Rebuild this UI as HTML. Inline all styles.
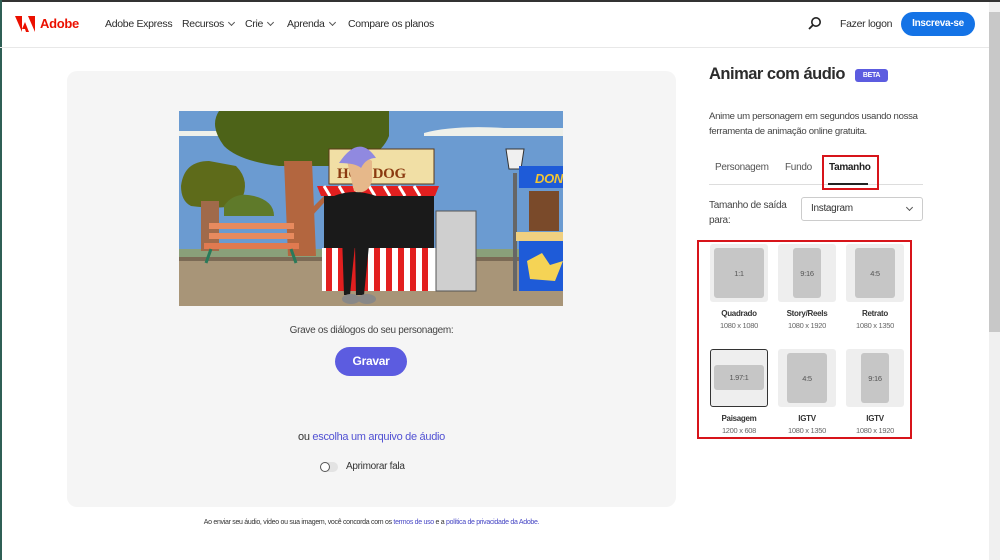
<!DOCTYPE html>
<html><head><meta charset="utf-8"><style>
*{box-sizing:border-box;margin:0;padding:0}
body{width:1000px;height:560px;overflow:hidden;background:#fff;font-family:"Liberation Sans",Arial,sans-serif;color:#2c2c2c;position:relative;letter-spacing:-0.3px}
.a{position:absolute}
.nav{font-size:10.5px;color:#2c2c2c;top:18px;white-space:nowrap}
.chev{display:inline-block;width:5px;height:5px;border-right:1px solid #555;border-bottom:1px solid #555;transform:rotate(45deg);margin-left:5px;position:relative;top:-2px}
.card{position:absolute;width:58px;height:58px;background:#eee;border-radius:3px}
.card div{position:absolute;background:#c6c6c6;border-radius:3px;font-size:7.5px;color:#555;display:flex;align-items:center;justify-content:center}
.lbl{position:absolute;width:90px;text-align:center;font-size:8px;font-weight:bold;color:#333}
.sub{position:absolute;width:90px;text-align:center;font-size:7.5px;color:#666}
</style></head><body>
<div class="a" style="left:0;top:0;width:1000px;height:2px;background:#333"></div>
<div class="a" style="left:0;top:0;width:2px;height:560px;background:#2f5f55"></div>
<svg class="a" style="left:15px;top:16px" width="20" height="16" viewBox="0 0 20 16"><path d="M0 0h7v16zM13 0h7v16zM10 6l4 10h-3l-1-3h-3z" fill="#eb1000"/></svg>
<div class="a" style="left:40px;top:16px;font-size:13px;color:#eb1000;font-weight:bold">Adobe</div>
<div class="a nav" style="left:105px">Adobe Express</div>
<div class="a nav" style="left:182px">Recursos<span class="chev"></span></div>
<div class="a nav" style="left:245px">Crie<span class="chev"></span></div>
<div class="a nav" style="left:287px">Aprenda<span class="chev"></span></div>
<div class="a nav" style="left:348px">Compare os planos</div>
<svg class="a" style="left:808px;top:16px" width="14" height="14" viewBox="0 0 14 14"><circle cx="8" cy="6" r="4.2" fill="none" stroke="#222" stroke-width="1.6"/><path d="M5 9l-4 4" stroke="#222" stroke-width="1.8"/></svg>
<div class="a nav" style="left:840px">Fazer logon</div>
<div class="a" style="left:901px;top:12px;width:74px;height:24px;border-radius:12px;background:#1473e6;color:#fff;font-size:10px;font-weight:bold;text-align:center;line-height:24px">Inscreva-se</div>
<div class="a" style="left:0;top:47px;width:989px;height:1px;background:#e8e8e8"></div>
<div class="a" style="left:989px;top:2px;width:11px;height:558px;background:#f0f0f0"></div>
<div class="a" style="left:989px;top:12px;width:11px;height:320px;background:#c8c8c8"></div>
<div class="a" style="left:67px;top:71px;width:609px;height:436px;background:#f5f5f5;border-radius:10px"></div>
<svg class="a" style="left:179px;top:111px" width="384" height="195" viewBox="0 0 384 195">
<rect width="384" height="195" fill="#6b9bd1"/>
<path d="M0 20h40v-10h10v15h-50zM245 22q30-8 80-5 40 0 59 0v8h-139zM150 48q30-5 80 4h-80zM50 95q20-3 40 0z" fill="#eef0ea"/>
<rect x="0" y="138" width="384" height="12" fill="#8aa07a"/>
<rect x="0" y="150" width="384" height="45" fill="#a89578"/>
<rect x="0" y="146" width="384" height="4" fill="#7b6a55"/>
<path d="M30 50q-25 0-28 25 0 15 10 20 40 5 50-5 10-20-5-35z" fill="#5e6b1a"/>
<rect x="22" y="90" width="18" height="50" fill="#a06a4a"/>
<path d="M40 0h170v25q-10 25-50 30h-60q-40-5-55-20-15-20-5-35z" fill="#4d6318"/>
<path d="M105 50h28l4 95h-28z" fill="#b3663f"/>
<path d="M130 100l20-20 3 3-20 22z" fill="#b3663f"/>
<path d="M45 95q10-15 30-10 20 5 20 20h-50z" fill="#5f7a2a"/>
<rect x="30" y="112" width="85" height="6" fill="#e88a5e"/><rect x="30" y="122" width="85" height="6" fill="#e88a5e"/><rect x="25" y="132" width="95" height="6" fill="#e07a50"/>
<path d="M32 138l-5 14M112 138l5 14" stroke="#2a7a5a" stroke-width="3"/>
<rect x="150" y="38" width="105" height="35" fill="#f1dfa5" stroke="#5a3a1a"/>
<text x="158" y="67" font-size="15" font-weight="bold" fill="#8a3a10" font-family="Liberation Serif">HOT DOG</text>
<path d="M138 75h122l-4 10h-114z" fill="#e21f1f"/>
<path d="M145 75l6 10M160 75l6 10M175 75l6 10M190 75l6 10M205 75l6 10M220 75l6 10M235 75l6 10" stroke="#fff" stroke-width="3"/>
<rect x="145" y="85" width="110" height="52" fill="#1a1a1a"/>
<rect x="143" y="137" width="115" height="43" fill="#fff"/>
<path d="M150 137v43M162 137v43M174 137v43M186 137v43M198 137v43M210 137v43M222 137v43M234 137v43M246 137v43" stroke="#e21f1f" stroke-width="6"/>
<rect x="257" y="100" width="40" height="80" fill="#cfcfcf" stroke="#555"/>
<rect x="828" y="0" width="0" height="0"/>
<rect x="828" y="0" width="0" height="0"/>
<rect x="827" y="0" width="0" height="0"/>
<rect x="828" y="0" width="0" height="0"/>
<rect x="826" y="0" width="0" height="0"/>
<rect x="827" y="0" width="0" height="0"/>
<rect x="826" y="0" width="0" height="0"/>
<rect x="827" y="0" width="0" height="0"/>
<rect x="827" y="0" width="0" height="0"/>
<rect x="826" y="0" width="0" height="0"/>
<rect x="827" y="0" width="0" height="0"/>
<rect x="826" y="0" width="0" height="0"/>
<rect x="827" y="0" width="0" height="0"/>
<rect x="828" y="0" width="0" height="0"/>
<rect x="333" y="55" width="0" height="0"/>
<rect x="334" y="62" width="4" height="118" fill="#666"/><path d="M327 38h18l-3 20h-12z" fill="#f0f0f0" stroke="#333"/>
<rect x="340" y="55" width="44" height="22" fill="#1e5bd8"/>
<text x="356" y="72" font-size="13" font-weight="bold" fill="#f3c634" font-family="Liberation Sans" font-style="italic">DON</text>
<path d="M350 80h30v40h-30z" fill="#7a4a2a"/>
<rect x="340" y="130" width="44" height="50" fill="#1e5bd8"/><path d="M348 150l15-8 8 12 13-4-8 20-25-2z" fill="#f5d355"/>
<rect x="337" y="121" width="47" height="9" fill="#f0d080"/>
<path d="M168 50q12-10 25 0v20q-5 15-18 10z" fill="#e6b88a"/>
<path d="M160 52q20-30 37-5-10 0-15 10-5-5-22-5z" fill="#9089e0"/>
<path d="M155 85q20-8 42 0l-6 40h-30z" fill="#1a1a1a"/>
<path d="M163 124h28l-6 60h-8l-1-50-5 50h-6z" fill="#1a1a1a"/>
<ellipse cx="172" cy="188" rx="9" ry="5" fill="#888"/><ellipse cx="188" cy="188" rx="9" ry="5" fill="#888"/>
</svg>
<div class="a" style="left:0;width:743px;top:325px;text-align:center;font-size:10px;color:#444">Grave os diálogos do seu personagem:</div>
<div class="a" style="left:335px;top:347px;width:72px;height:29px;border-radius:15px;background:#5c5ce0;color:#fff;font-weight:bold;font-size:12px;text-align:center;line-height:29px">Gravar</div>
<div class="a" style="left:0;width:743px;top:431px;text-align:center;font-size:11px;color:#333">ou <span style="color:#5151d3">escolha um arquivo de áudio</span></div>
<div class="a" style="left:320px;top:462px;width:18px;height:10px;border-radius:5px;background:#e3e3e3"></div>
<div class="a" style="left:320px;top:462px;width:10px;height:10px;border-radius:5px;border:1.5px solid #555;background:#fff"></div>
<div class="a" style="left:346px;top:461px;font-size:10px;color:#333">Aprimorar fala</div>
<div class="a" style="left:0;width:743px;top:519px;text-align:center;font-size:7px;color:#333">Ao enviar seu áudio, vídeo ou sua imagem, você concorda com os <span style="color:#4646c4">termos de uso</span> e a <span style="color:#4646c4">política de privacidade da Adobe.</span></div>
<div class="a" style="left:709px;top:65px;font-size:16.5px;font-weight:bold;color:#2c2c2c;letter-spacing:-0.5px">Animar com áudio</div>
<div class="a" style="left:855px;top:69px;width:33px;height:13px;border-radius:3px;background:#5c5ce0;color:#fff;font-size:7px;font-weight:bold;text-align:center;line-height:13px">BETA</div>
<div class="a" style="left:709px;top:109px;font-size:9.6px;line-height:15px;color:#444;width:235px">Anime um personagem em segundos usando nossa ferramenta de animação online gratuita.</div>
<div class="a" style="left:715px;top:162px;font-size:10px;color:#555">Personagem</div>
<div class="a" style="left:785px;top:162px;font-size:10px;color:#555">Fundo</div>
<div class="a" style="left:829px;top:162px;font-size:10px;font-weight:bold;color:#222">Tamanho</div>
<div class="a" style="left:709px;top:184px;width:214px;height:1px;background:#ddd"></div>
<div class="a" style="left:828px;top:183px;width:40px;height:2px;background:#222"></div>
<div class="a" style="left:822px;top:155px;width:57px;height:35px;border:2px solid #d7141a"></div>
<div class="a" style="left:709px;top:198px;font-size:10px;line-height:15px;color:#444">Tamanho de saída<br>para:</div>
<div class="a" style="left:801px;top:197px;width:122px;height:24px;border:1px solid #ccc;border-radius:3px;font-size:10px;line-height:22px;padding-left:9px;color:#333">Instagram<span class="chev" style="position:absolute;right:10px;top:7px;margin:0"></span></div>
<div class="a" style="left:697px;top:240px;width:215px;height:199px;border:2px solid #d7141a"></div>
<div class="card" style="left:710px;top:244px"><div style="left:4px;top:4px;width:50px;height:50px">1:1</div></div>
<div class="card" style="left:778px;top:244px"><div style="left:15px;top:4px;width:28px;height:50px">9:16</div></div>
<div class="card" style="left:846px;top:244px"><div style="left:9px;top:4px;width:40px;height:50px">4:5</div></div>
<div class="card" style="left:710px;top:349px;border:1.5px solid #333"><div style="left:3px;top:15px;width:50px;height:25px">1.97:1</div></div>
<div class="card" style="left:778px;top:349px"><div style="left:9px;top:4px;width:40px;height:50px">4:5</div></div>
<div class="card" style="left:846px;top:349px"><div style="left:15px;top:4px;width:28px;height:50px">9:16</div></div>
<div class="lbl" style="left:694px;top:309px">Quadrado</div><div class="sub" style="left:694px;top:321px">1080 x 1080</div>
<div class="lbl" style="left:762px;top:309px">Story/Reels</div><div class="sub" style="left:762px;top:321px">1080 x 1920</div>
<div class="lbl" style="left:830px;top:309px">Retrato</div><div class="sub" style="left:830px;top:321px">1080 x 1350</div>
<div class="lbl" style="left:694px;top:414px">Paisagem</div><div class="sub" style="left:694px;top:426px">1200 x 608</div>
<div class="lbl" style="left:762px;top:414px">IGTV</div><div class="sub" style="left:762px;top:426px">1080 x 1350</div>
<div class="lbl" style="left:830px;top:414px">IGTV</div><div class="sub" style="left:830px;top:426px">1080 x 1920</div>
</body></html>
